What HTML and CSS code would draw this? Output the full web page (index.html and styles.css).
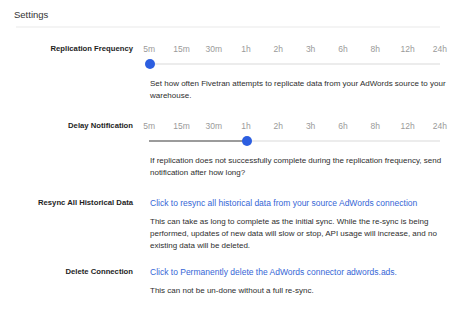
FILE: index.html
```html
<!DOCTYPE html>
<html lang="en">
<head>
    <meta charset="UTF-8">
    <meta name="viewport" content="width=device-width, initial-scale=1.0">
    <link rel="stylesheet" href="styles.css">
    <title>Settings</title>
</head>
<body>
    <div class="page">
        <h2 class="title">Settings</h2>
        <div class="divider"></div>

        <!-- Replication frequency -->
        <div class="row">
            <div class="label">Replication Frequency</div>
            <div class="field">
                <div class="ticks">
                    <span>5m</span><span>15m</span><span>30m</span><span>1h</span><span>2h</span>
                    <span>3h</span><span>6h</span><span>8h</span><span>12h</span><span>24h</span>
                </div>
                <div class="slider">
                    <div class="track"></div>
                    <div class="thumb" style="left: 0px;"></div>
                </div>
                <p class="desc">Set how often Fivetran attempts to replicate data from your AdWords source to your warehouse.</p>
            </div>
        </div>

        <!-- Delay notification -->
        <div class="row">
            <div class="label">Delay Notification</div>
            <div class="field">
                <div class="ticks">
                    <span>5m</span><span>15m</span><span>30m</span><span>1h</span><span>2h</span>
                    <span>3h</span><span>6h</span><span>8h</span><span>12h</span><span>24h</span>
                </div>
                <div class="slider">
                    <div class="track"></div>
                    <div class="fill" style="width: 97px;"></div>
                    <div class="thumb" style="left: 97px;"></div>
                </div>
                <p class="desc">If replication does not successfully complete during the replication frequency, send notification after how long?</p>
            </div>
        </div>

        <!-- Resync -->
        <div class="row row-link">
            <div class="label">Resync All Historical Data</div>
            <div class="field">
                <a href="#" class="link">Click to resync all historical data from your source AdWords connection</a>
                <p class="desc">This can take as long to complete as the initial sync. While the re-sync is being performed, updates of new data will slow or stop, API usage will increase, and no existing data will be deleted.</p>
            </div>
        </div>

        <!-- Delete -->
        <div class="row row-link row-last">
            <div class="label">Delete Connection</div>
            <div class="field">
                <a href="#" class="link">Click to Permanently delete the AdWords connector adwords.ads.</a>
                <p class="desc">This can not be un-done without a full re-sync.</p>
            </div>
        </div>
    </div>
</body>
</html>
```

FILE: styles.css
```css
body {
    margin: 0;
    background-color: #ffffff;
    font-family: "Liberation Sans", Arial, sans-serif;
    color: #222222;
}

.page {
    padding-top: 8px;
}

.title {
    margin: 0 0 0 14px;
    font-size: 9.5px;
    font-weight: normal;
    line-height: 14px;
    color: #333333;
}

.divider {
    margin: 4px 34px 0 16px;
    height: 2px;
    background-color: #f4f4f4;
}

.row {
    display: grid;
    grid-template-columns: 133px 1fr;
    margin-top: 15px;
}

.row + .row {
    margin-top: 18px;
}

.row-last {
    margin-top: 14px !important;
}

.label {
    text-align: right;
    font-size: 7.7px;
    font-weight: bold;
    line-height: 12px;
    color: #1e1e1e;
}

.field {
    display: flex;
    flex-direction: column;
}

.ticks {
    display: grid;
    grid-template-columns: repeat(10, 32.3px);
    font-size: 8.5px;
    line-height: 12px;
    color: #9a9a9a;
}

.ticks span {
    text-align: center;
}

.slider {
    position: relative;
    margin: 4px 0 0 16px;
    width: 291px;
    height: 10px;
}

.track {
    position: absolute;
    top: 4px;
    left: 0;
    right: 0;
    height: 2px;
    background-color: #ececec;
}

.fill {
    position: absolute;
    top: 4px;
    left: 0;
    height: 2px;
    background-color: #9b9b9b;
}

.thumb {
    position: absolute;
    top: 0;
    width: 10px;
    height: 10px;
    margin-left: -4px;
    border-radius: 50%;
    background-color: #2c5ee0;
}

.desc {
    margin: 9px 0 0 17px;
    width: 302px;
    font-size: 8px;
    line-height: 12px;
    color: #2e2e2e;
}

.link {
    margin-left: 17px;
    font-size: 8.5px;
    line-height: 12px;
    color: #3566d6;
    text-decoration: none;
}

.row-link .desc {
    margin-top: 7px;
}
```
